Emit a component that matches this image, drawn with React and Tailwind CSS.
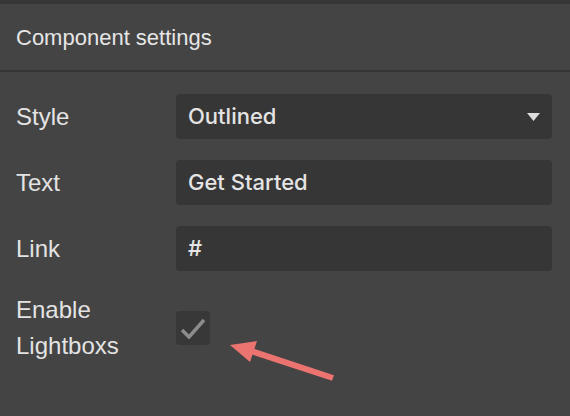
import React from 'react';

function Row({ label, children }) {
  return (
    <div className="grid grid-cols-[160px_1fr] items-center">
      <span className="text-[24px] text-[#e3e3e3]">{label}</span>
      {children}
    </div>
  );
}

export default function App() {
  return (
    <div className="relative h-[416px] w-[570px] overflow-hidden bg-[#444444] font-['Liberation_Sans',Arial,sans-serif]">
      <div className="h-[4px] bg-[#363636]" />
      <div className="flex h-[68px] items-center border-b-2 border-[#353535] px-4 text-[22px] text-[#e6e6e6]">
        Component settings
      </div>

      <div className="flex flex-col gap-[21px] pl-4 pr-[18px] pt-[22px]">
        <Row label="Style">
          <div className="flex h-[45px] items-center justify-between rounded-[4px] bg-[#363636] pl-3 pr-3 font-['Inter',sans-serif] text-[22px] font-medium text-[#e4e4e4]">
            <span>Outlined</span>
            <svg width="13" height="8" viewBox="0 0 13 8">
              <path d="M0 0 H13 L6.5 8 Z" fill="#dcdcdc" />
            </svg>
          </div>
        </Row>
        <Row label="Text">
          <div className="flex h-[45px] items-center rounded-[4px] bg-[#363636] pl-3 font-['Inter',sans-serif] text-[22px] font-medium text-[#e4e4e4]">
            Get Started
          </div>
        </Row>
        <Row label="Link">
          <div className="flex h-[45px] items-center rounded-[4px] bg-[#363636] pl-3 font-['Inter',sans-serif] text-[22px] font-medium text-[#e4e4e4]">
            #
          </div>
        </Row>
        <div className="grid grid-cols-[160px_1fr] items-center">
          <span className="text-[24px] leading-[36px] text-[#e3e3e3]">
            Enable
            <br />
            Lightboxs
          </span>
          <div className="flex h-[34px] w-[34px] items-center justify-center rounded-[4px] bg-[#383838]">
            <svg width="26" height="22" viewBox="0 0 26 22">
              <path d="M2 13 L9 20 L24 3" fill="none" stroke="#8c8c8c" strokeWidth="3.5" />
            </svg>
          </div>
        </div>
      </div>

      <svg className="absolute left-0 top-0" width="570" height="416" viewBox="0 0 570 416">
        <line x1="333" y1="378" x2="248" y2="350" stroke="#ec7470" strokeWidth="6" />
        <path d="M230 345 L257 341 L250 362 Z" fill="#ec7470" />
      </svg>
    </div>
  );
}
